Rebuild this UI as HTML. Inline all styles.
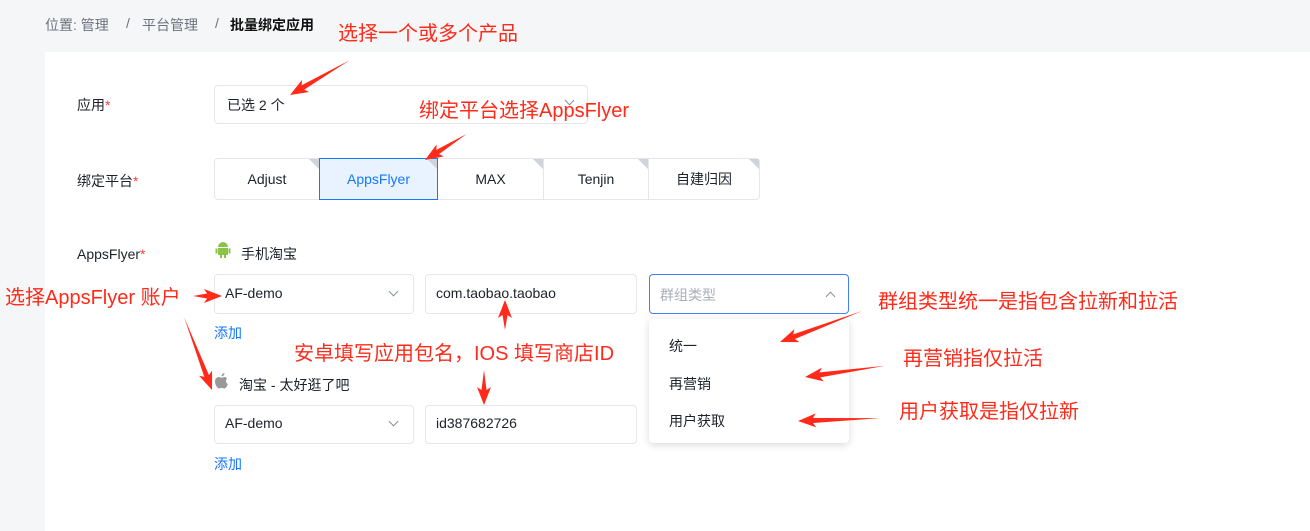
<!DOCTYPE html><html><head><meta charset="utf-8"><style>
*{box-sizing:border-box;margin:0;padding:0}
body{width:1310px;height:531px;background:#f5f6f7;font-family:"Liberation Sans","Noto Sans CJK SC",sans-serif;font-size:14px;color:#1d2129;position:relative;overflow:hidden}
.a{position:absolute;white-space:nowrap}
.panel{position:absolute;left:45px;top:52px;width:1265px;height:479px;background:#fff}
.box{position:absolute;border:1px solid #e5e6eb;border-radius:4px;background:#fff}
.chev{position:absolute;width:7px;height:7px;border-right:1.5px solid #86909c;border-bottom:1.5px solid #86909c;transform:rotate(45deg)}
.star{color:#f53f3f}
.red{color:#ff2a1a;font-size:20px;line-height:24px}
.tab{position:absolute;top:158px;height:42px;border:1px solid #e5e6eb;text-align:center;line-height:40px;background:#fff}
.tab:after{content:"";position:absolute;right:0;top:0;border-top:10px solid #d0d3d9;border-left:10px solid transparent}
.blue{color:#1677ff}
.bc{color:#6b7280;top:15px}
</style></head><body>
<div class="a bc" style="left:45px">位置: 管理</div>
<div class="a bc" style="left:126px">/</div>
<div class="a bc" style="left:142px">平台管理</div>
<div class="a bc" style="left:215px">/</div>
<div class="a bc" style="left:230px;color:#111;font-weight:bold">批量绑定应用</div>
<div class="panel"></div>
<div class="a" style="left:77px;top:95px">应用<span class="star">*</span></div>
<div class="a" style="left:77px;top:171px">绑定平台<span class="star">*</span></div>
<div class="a" style="left:77px;top:246px">AppsFlyer<span class="star">*</span></div>
<div class="box" style="left:214px;top:85px;width:374px;height:39px"></div>
<div class="a" style="left:227px;top:95px">已选 2 个</div>
<div class="chev" style="left:566px;top:97px"></div>
<div class="tab" style="left:214px;width:106px;border-radius:4px 0 0 4px">Adjust</div>
<div class="tab" style="left:437px;width:107px">MAX</div>
<div class="tab" style="left:543px;width:106px">Tenjin</div>
<div class="tab" style="left:648px;width:112px;border-radius:0 4px 4px 0">自建归因</div>
<div class="tab" style="left:319px;width:119px;border-color:#1677ff;background:#e8f3ff;color:#1677ff">AppsFlyer</div>
<svg class="a" style="left:215px;top:241px" width="16" height="18" viewBox="0 0 16 18"><path d="M3 6a5 5 0 0 1 10 0z M3 7h10v7H3z M0.5 7.5h2v5h-2z M13.5 7.5h2v5h-2z M5 14h2v3H5z M9 14h2v3H9z" fill="#8bc34a"/></svg>
<div class="a" style="left:241px;top:244px">手机淘宝</div>
<div class="box" style="left:214px;top:274px;width:200px;height:40px"></div>
<div class="a" style="left:225px;top:285px">AF-demo</div>
<div class="chev" style="left:390px;top:288px"></div>
<div class="box" style="left:425px;top:274px;width:212px;height:40px"></div>
<div class="a" style="left:436px;top:285px">com.taobao.taobao</div>
<div class="box" style="left:649px;top:274px;width:200px;height:40px;border-color:#4080ff"></div>
<div class="a" style="left:660px;top:285px;color:#a9aeb8">群组类型</div>
<div class="chev" style="left:827px;top:293px;transform:rotate(225deg)"></div>
<div class="a blue" style="left:214px;top:323px">添加</div>
<svg class="a" style="left:215px;top:373px" width="14" height="17" viewBox="0 0 14 17"><path d="M9.5 0c0 2-1.5 3.5-3 3.4C6.4 1.6 8 .2 9.5 0zM12 6c-1.5 1-1.5 4 .8 5-.6 2-2 4.5-3.5 4.5-1 0-1.5-.6-2.6-.6s-1.7.6-2.6.6C2.3 15.5 0 11.5 0 8.5 0 5 2.5 4 4 4c1 0 2 .7 2.7.7S8.5 4 9.8 4C10.5 4 11.5 4.4 12 6z" fill="#999"/></svg>
<div class="a" style="left:239px;top:375px">淘宝 - 太好逛了吧</div>
<div class="box" style="left:214px;top:405px;width:200px;height:39px"></div>
<div class="a" style="left:225px;top:415px">AF-demo</div>
<div class="chev" style="left:390px;top:418px"></div>
<div class="box" style="left:425px;top:405px;width:212px;height:39px"></div>
<div class="a" style="left:436px;top:415px">id387682726</div>
<div class="a blue" style="left:214px;top:454px">添加</div>
<div class="a" style="left:649px;top:319px;width:200px;height:124px;background:#fff;border-radius:4px;box-shadow:0 2px 8px rgba(0,0,0,.15)"></div>
<div class="a" style="left:669px;top:336px">统一</div>
<div class="a" style="left:669px;top:374px">再营销</div>
<div class="a" style="left:669px;top:411px">用户获取</div>
<div class="a red" style="left:338px;top:22px">选择一个或多个产品</div>
<div class="a red" style="left:419px;top:99px">绑定平台选择AppsFlyer</div>
<div class="a red" style="left:5px;top:286px">选择AppsFlyer 账户</div>
<div class="a red" style="left:294px;top:342px">安卓填写应用包名，IOS 填写商店ID</div>
<div class="a red" style="left:878px;top:290px">群组类型统一是指包含拉新和拉活</div>
<div class="a red" style="left:903px;top:347px">再营销指仅拉活</div>
<div class="a red" style="left:899px;top:400px">用户获取是指仅拉新</div>
<svg class="a" style="left:0;top:0" width="1310" height="531">
<g transform="translate(290,95) rotate(149.7)"><polygon points="0,0 -18,-7 -15,-2.5 -69,0 -15,2.5 -18,7" fill="#ff2a1a"/></g>
<g transform="translate(425,160) rotate(148)"><polygon points="0,0 -18,-7 -15,-2.5 -49,0 -15,2.5 -18,7" fill="#ff2a1a"/></g>
<g transform="translate(222,296) rotate(0)"><polygon points="0,0 -18,-7 -15,-2.5 -29,0 -15,2.5 -18,7" fill="#ff2a1a"/></g>
<g transform="translate(212,390) rotate(69)"><polygon points="0,0 -18,-7 -15,-2.5 -78,0 -15,2.5 -18,7" fill="#ff2a1a"/></g>
<g transform="translate(505,300) rotate(-90)"><polygon points="0,0 -18,-7 -15,-2.5 -30,0 -15,2.5 -18,7" fill="#ff2a1a"/></g>
<g transform="translate(484,405) rotate(90)"><polygon points="0,0 -18,-7 -15,-2.5 -35,0 -15,2.5 -18,7" fill="#ff2a1a"/></g>
<g transform="translate(780,342) rotate(159.3)"><polygon points="0,0 -18,-7 -15,-2.5 -88,0 -15,2.5 -18,7" fill="#ff2a1a"/></g>
<g transform="translate(805,377) rotate(172)"><polygon points="0,0 -18,-7 -15,-2.5 -81,0 -15,2.5 -18,7" fill="#ff2a1a"/></g>
<g transform="translate(798,421) rotate(178)"><polygon points="0,0 -18,-7 -15,-2.5 -82,0 -15,2.5 -18,7" fill="#ff2a1a"/></g>
</svg>
</body></html>
